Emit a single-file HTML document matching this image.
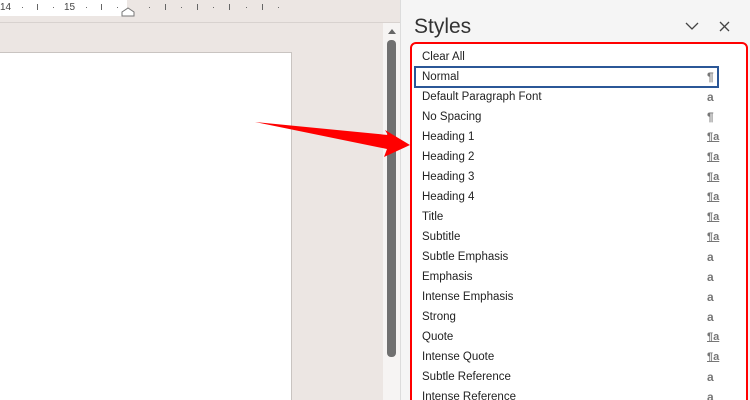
<!DOCTYPE html>
<html><head><style>
html,body{margin:0;width:750px;height:400px;overflow:hidden}
body{position:relative;background:#ece6e3;font-family:"Liberation Sans",sans-serif}
.a{position:absolute}
.row{position:absolute;left:422px;font-size:11.5px;color:#222;height:20px;line-height:20px;width:300px}
.ic{position:absolute;left:285px;top:0;color:#777;font-weight:bold;font-size:12px}
.pa{text-decoration:underline;font-size:11px}
</style></head><body>
<div class="a" style="left:0;top:0;width:127px;height:16px;background:#fff"></div>
<div class="a" style="left:0;top:22px;width:400px;height:1px;background:#d8d2cf"></div>
<div class="a" style="left:0;top:2px;font-size:10px;color:#444">14</div>
<div class="a" style="left:64px;top:2px;font-size:10px;color:#444">15</div>
<div class="a" style="left:0;top:0;width:290px;height:16px;font-size:9px;color:#555">
<span class="a" style="left:21px;top:2px">·</span><span class="a" style="left:37px;top:4px;width:1px;height:6px;background:#666"></span><span class="a" style="left:52px;top:2px">·</span>
<span class="a" style="left:85px;top:2px">·</span><span class="a" style="left:101px;top:4px;width:1px;height:6px;background:#666"></span><span class="a" style="left:116px;top:2px">·</span>
<span class="a" style="left:148px;top:2px">·</span><span class="a" style="left:165px;top:4px;width:1px;height:6px;background:#666"></span><span class="a" style="left:180px;top:2px">·</span><span class="a" style="left:197px;top:4px;width:1px;height:6px;background:#666"></span><span class="a" style="left:212px;top:2px">·</span><span class="a" style="left:229px;top:4px;width:1px;height:6px;background:#666"></span><span class="a" style="left:245px;top:2px">·</span><span class="a" style="left:262px;top:4px;width:1px;height:6px;background:#666"></span><span class="a" style="left:277px;top:2px">·</span>
</div>
<svg class="a" style="left:121px;top:7px" width="14" height="10"><path d="M1 9V5L7 1L13 5V9Z" fill="#fff" stroke="#777"/></svg>
<div class="a" style="left:-1px;top:52px;width:291px;height:360px;background:#fff;border:1px solid #c9c4c1"></div>
<div class="a" style="left:383px;top:23px;width:17px;height:377px;background:#f6f4f3"></div>
<svg class="a" style="left:386px;top:26px" width="12" height="10"><path d="M2 8L6 3L10 8Z" fill="#666"/></svg>
<div class="a" style="left:387px;top:40px;width:9px;height:317px;background:#707070;border-radius:4px"></div>
<div class="a" style="left:400px;top:0;width:350px;height:400px;background:#f5f5f5;border-left:1px solid #dcdcdc"></div>
<div class="a" style="left:414px;top:15px;font-size:21px;color:#333">Styles</div>
<svg class="a" style="left:684px;top:20px" width="50" height="14"><path d="M2 3L8 9L14 3" fill="none" stroke="#444" stroke-width="1.3"/><path d="M36 2L45 11M45 2L36 11" stroke="#444" stroke-width="1.3"/></svg>
<div class="a" style="left:410px;top:42px;width:334px;height:370px;background:#fff;border:2px solid #f00;border-radius:6px"></div>
<div class="a" style="left:414px;top:66px;width:301px;height:18px;border:2px solid #2b5797"></div>
<div class="row" style="top:47px">Clear All</div>
<div class="row" style="top:67px">Normal<span class="ic">¶</span></div>
<div class="row" style="top:87px">Default Paragraph Font<span class="ic">a</span></div>
<div class="row" style="top:107px">No Spacing<span class="ic">¶</span></div>
<div class="row" style="top:127px">Heading 1<span class="ic pa">¶a</span></div>
<div class="row" style="top:147px">Heading 2<span class="ic pa">¶a</span></div>
<div class="row" style="top:167px">Heading 3<span class="ic pa">¶a</span></div>
<div class="row" style="top:187px">Heading 4<span class="ic pa">¶a</span></div>
<div class="row" style="top:207px">Title<span class="ic pa">¶a</span></div>
<div class="row" style="top:227px">Subtitle<span class="ic pa">¶a</span></div>
<div class="row" style="top:247px">Subtle Emphasis<span class="ic">a</span></div>
<div class="row" style="top:267px">Emphasis<span class="ic">a</span></div>
<div class="row" style="top:287px">Intense Emphasis<span class="ic">a</span></div>
<div class="row" style="top:307px">Strong<span class="ic">a</span></div>
<div class="row" style="top:327px">Quote<span class="ic pa">¶a</span></div>
<div class="row" style="top:347px">Intense Quote<span class="ic pa">¶a</span></div>
<div class="row" style="top:367px">Subtle Reference<span class="ic">a</span></div>
<div class="row" style="top:387px">Intense Reference<span class="ic">a</span></div>
<svg class="a" style="left:0;top:0" width="750" height="400"><path d="M255 122L388 135L385 130L410 145L384 157L387 149Z" fill="#f00"/></svg>
</body></html>
